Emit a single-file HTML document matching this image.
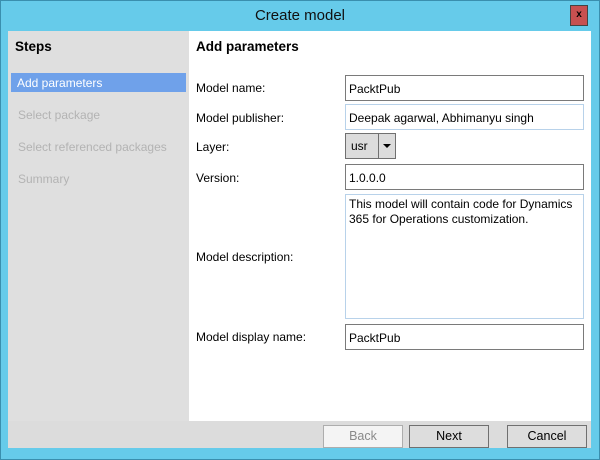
<html><head><style>
body{margin:0;width:600px;height:460px;background:#66cbea;font-family:"Liberation Sans",sans-serif;font-size:12px;position:relative;overflow:hidden}
.a{position:absolute}
.outer{left:0;top:0;width:598px;height:458px;border:1px solid #3a8fae}
.in{border:1px solid #7a7a7a;background:#fff;box-sizing:border-box;padding:4px 3px;color:#000}
.lbl{left:196px;color:#000}
.btn{border:1px solid #707070;background:#dddddd;box-sizing:border-box;text-align:center;line-height:20px;font-size:12.5px}
</style></head><body>
<div class="a outer"></div>
<div class="a" style="left:0;top:7px;width:600px;text-align:center;font-size:15px;color:#111">Create model</div>
<div class="a" style="left:570px;top:5px;width:18px;height:21px;background:#c75050;border:1px solid #444;box-sizing:border-box;color:#000;font-size:10px;text-align:center;line-height:18px;font-weight:bold">x</div>
<div class="a" style="left:8px;top:31px;width:181px;height:390px;background:#dfdfdf"></div>
<div class="a" style="left:189px;top:31px;width:402px;height:390px;background:#fff"></div>
<div class="a" style="left:8px;top:421px;width:583px;height:27px;background:#dcdcdc"></div>
<div class="a" style="left:15px;top:39px;font-weight:bold;font-size:13.5px">Steps</div>
<div class="a" style="left:11px;top:73px;width:175px;height:19px;background:#6fa1ea;color:#fff;box-sizing:border-box;padding:3px 6px">Add parameters</div>
<div class="a" style="left:18px;top:108px;color:#b3b3b3">Select package</div>
<div class="a" style="left:18px;top:140px;color:#b3b3b3">Select referenced packages</div>
<div class="a" style="left:18px;top:172px;color:#b3b3b3">Summary</div>
<div class="a" style="left:196px;top:39px;font-weight:bold;font-size:13.5px">Add parameters</div>
<div class="a lbl" style="top:81px">Model name:</div>
<div class="a lbl" style="top:111px">Model publisher:</div>
<div class="a lbl" style="top:140px">Layer:</div>
<div class="a lbl" style="top:171px">Version:</div>
<div class="a lbl" style="top:250px">Model description:</div>
<div class="a lbl" style="top:330px">Model display name:</div>
<div class="a in" style="left:345px;top:75px;width:239px;height:26px;padding-top:6px">PacktPub</div>
<div class="a in" style="left:345px;top:104px;width:239px;height:26px;padding-top:6px;border-color:#b8d2ea">Deepak agarwal, Abhimanyu singh</div>
<div class="a" style="left:345px;top:133px;width:51px;height:26px;background:#dcdcdc;border:1px solid #707070;box-sizing:border-box"></div>
<div class="a" style="left:351px;top:139px">usr</div>
<div class="a" style="left:378px;top:134px;width:1px;height:24px;background:#707070"></div>
<div class="a" style="left:383px;top:144px;width:0;height:0;border-left:4px solid transparent;border-right:4px solid transparent;border-top:4px solid #000"></div>
<div class="a in" style="left:345px;top:164px;width:239px;height:26px;padding-top:6px">1.0.0.0</div>
<div class="a in" style="left:345px;top:194px;width:239px;height:125px;border-color:#b8d2ea;line-height:15px;padding-top:2px">This model will contain code for Dynamics 365 for Operations customization.</div>
<div class="a in" style="left:345px;top:324px;width:239px;height:26px;padding-top:6px">PacktPub</div>
<div class="a btn" style="left:323px;top:425px;width:80px;height:23px;background:#f4f4f4;border-color:#adadad;color:#8a8a8a">Back</div>
<div class="a btn" style="left:409px;top:425px;width:80px;height:23px">Next</div>
<div class="a btn" style="left:507px;top:425px;width:80px;height:23px">Cancel</div>
</body></html>
